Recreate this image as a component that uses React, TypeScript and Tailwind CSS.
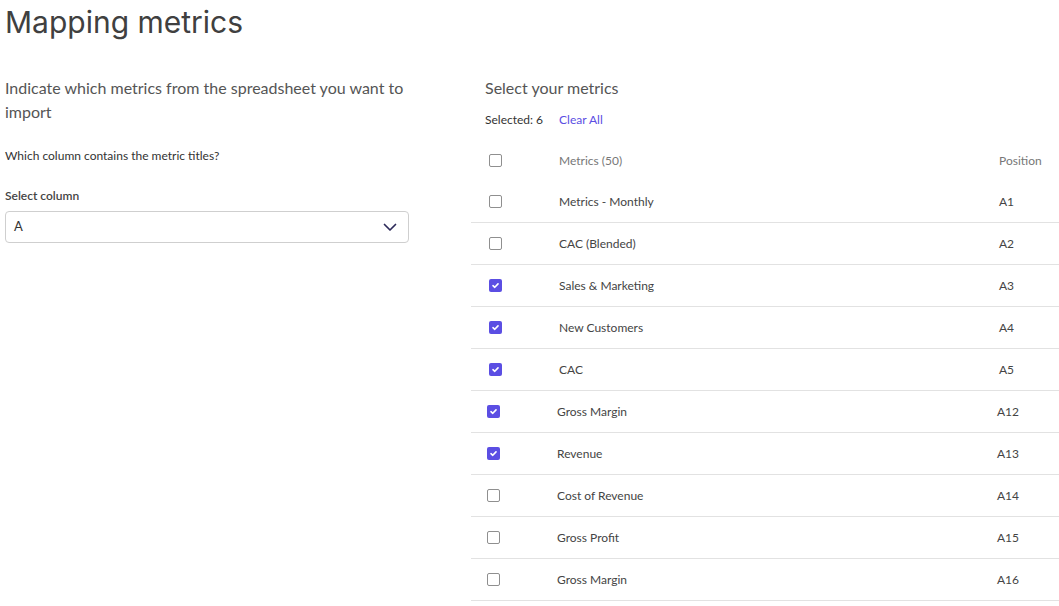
import React from "react";

const rows = [
  { name: "Metrics - Monthly", pos: "A1", checked: false, shift: false },
  { name: "CAC (Blended)", pos: "A2", checked: false, shift: false },
  { name: "Sales & Marketing", pos: "A3", checked: true, shift: false },
  { name: "New Customers", pos: "A4", checked: true, shift: false },
  { name: "CAC", pos: "A5", checked: true, shift: false },
  { name: "Gross Margin", pos: "A12", checked: true, shift: true },
  { name: "Revenue", pos: "A13", checked: true, shift: true },
  { name: "Cost of Revenue", pos: "A14", checked: false, shift: true },
  { name: "Gross Profit", pos: "A15", checked: false, shift: true },
  { name: "Gross Margin", pos: "A16", checked: false, shift: true },
];

function Box({ checked }: { checked: boolean }) {
  if (checked) {
    return (
      <span className="flex h-[13px] w-[13px] items-center justify-center rounded-[2px] bg-[#5b4ee3]">
        <svg width="9" height="9" viewBox="0 0 10 10" fill="none">
          <path d="M2.2 5.2 L4.2 7 L7.8 3.2" stroke="white" strokeWidth="1.8" strokeLinecap="round" strokeLinejoin="round" />
        </svg>
      </span>
    );
  }
  return <span className="block h-[13px] w-[13px] rounded-[2px] border border-[#8f8f8f] bg-white" />;
}

export default function App() {
  return (
    <div className="h-[606px] w-[1059px] overflow-hidden bg-white text-[#444]" style={{ fontFamily: "Lato, 'Open Sans', sans-serif" }}>
      <h1 className="pl-[5px] text-[30px] leading-[44px] text-[#404040] font-normal" style={{ fontFamily: "Inter, 'Noto Sans', sans-serif" }}>
        Mapping metrics
      </h1>
      <div className="mt-[32px] flex">
        <div className="ml-[5px] w-[404px]">
          <p className="text-[16px] leading-[24px] text-[#555]">
            Indicate which metrics from the spreadsheet you want to import
          </p>
          <p className="mt-[24px] text-[12px] leading-[16px] text-[#333]">Which column contains the metric titles?</p>
          <p className="mt-[24px] text-[12px] leading-[16px] font-semibold text-[#444]">Select column</p>
          <div className="mt-[7px] flex h-[32px] items-center justify-between rounded-[4px] border border-[#cfcfcf] pl-[8px] pr-[11px]">
            <span className="text-[13px] text-[#333]">A</span>
            <svg width="14" height="9" viewBox="0 0 14 9" fill="none">
              <path d="M1.5 1.5 L7 7 L12.5 1.5" stroke="#2d2a5a" strokeWidth="1.7" strokeLinecap="round" strokeLinejoin="round" />
            </svg>
          </div>
        </div>
        <div className="ml-[62px] flex-1">
          <h2 className="pl-[14px] text-[16px] leading-[24px] text-[#555]">Select your metrics</h2>
          <div className="mt-[12px] flex gap-[16px] pl-[14px] text-[12px] leading-[16px]">
            <span className="text-[#333]">Selected: 6</span>
            <span className="text-[#5b4ee3]">Clear All</span>
          </div>
          <div className="mt-[12px] grid h-[41px] grid-cols-[70px_440px_1fr] items-center pl-[18px] text-[12px] text-[#777]">
            <Box checked={false} />
            <span>Metrics (50)</span>
            <span>Position</span>
          </div>
          {rows.map((r, i) => (
            <div
              key={i}
              className={`grid h-[42px] grid-cols-[70px_440px_1fr] items-center border-b border-[#e2e2e2] text-[12px] text-[#444] ${r.shift ? "pl-[16px]" : "pl-[18px]"}`}
            >
              <Box checked={r.checked} />
              <span>{r.name}</span>
              <span>{r.pos}</span>
            </div>
          ))}
        </div>
      </div>
    </div>
  );
}
